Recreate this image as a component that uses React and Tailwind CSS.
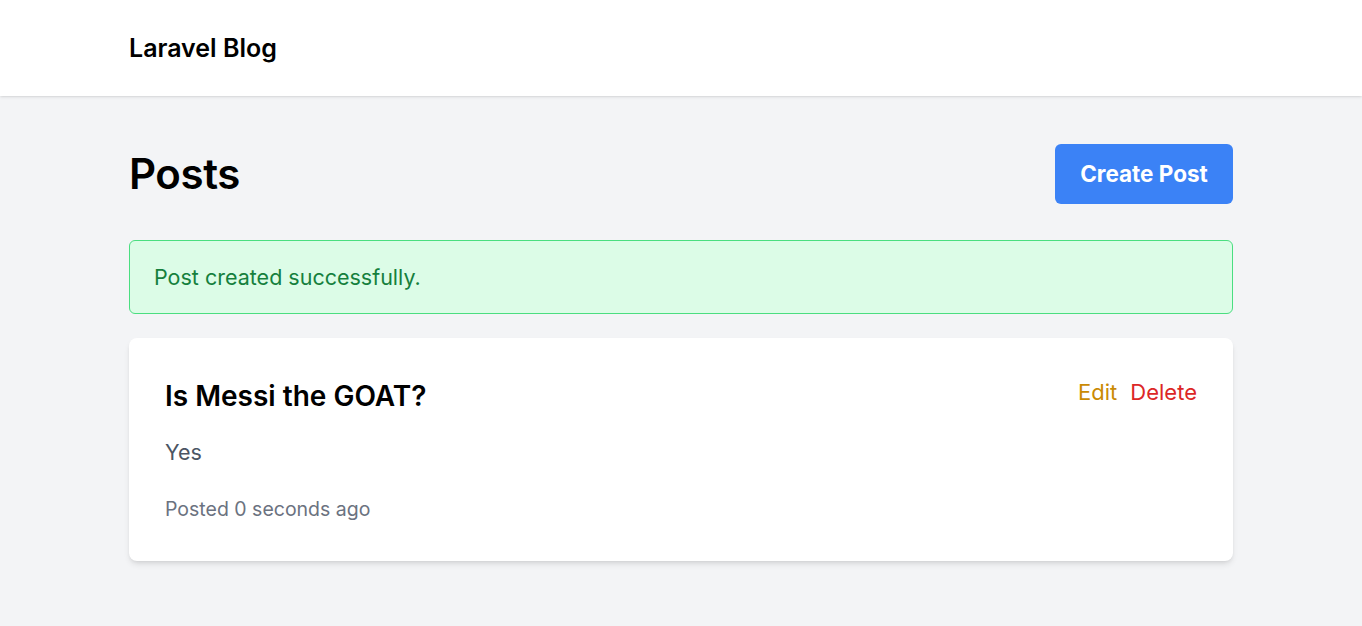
export default function App() {
  return (
    <div className="min-h-screen bg-[#f3f4f6]" style={{ fontFamily: 'Inter, "Noto Sans", sans-serif' }}>
      <header className="bg-white shadow">
        <div className="max-w-6xl mx-auto px-6 h-24 flex items-center pt-px">
          <span className="text-[25px] font-semibold text-black">Laravel Blog</span>
        </div>
      </header>
      <main className="max-w-6xl mx-auto px-6 py-12">
        <div className="flex items-center justify-between mb-9">
          <h1 className="text-[42px] leading-[60px] font-semibold text-black tracking-[-0.01em]">Posts</h1>
          <button className="bg-[#3b82f6] text-white text-[22.5px] font-bold rounded-md h-[60px] w-[178px]">
            Create Post
          </button>
        </div>
        <div className="bg-[#dcfce7] border border-[#4ade80] text-[#15803d] text-[21.5px] rounded-md px-6 h-[74px] flex items-center mb-6">
          Post created successfully.
        </div>
        <div className="bg-white rounded-lg shadow-md px-9 pt-9 pb-[38px]">
          <div className="flex items-start justify-between">
            <h2 className="text-[28px] leading-[36px] font-semibold text-black mt-1">Is Messi the GOAT?</h2>
            <div className="flex gap-[13px] text-[22px] leading-[30px] mt-[3px]">
              <a className="text-[#ca8a04]">Edit</a>
              <a className="text-[#dc2626]">Delete</a>
            </div>
          </div>
          <p className="text-[21.5px] leading-[30px] text-[#4b5563] mt-[23px]">Yes</p>
          <p className="text-[19.5px] leading-[28px] text-[#6b7280] mt-[28px]">Posted 0 seconds ago</p>
        </div>
      </main>
    </div>
  )
}
